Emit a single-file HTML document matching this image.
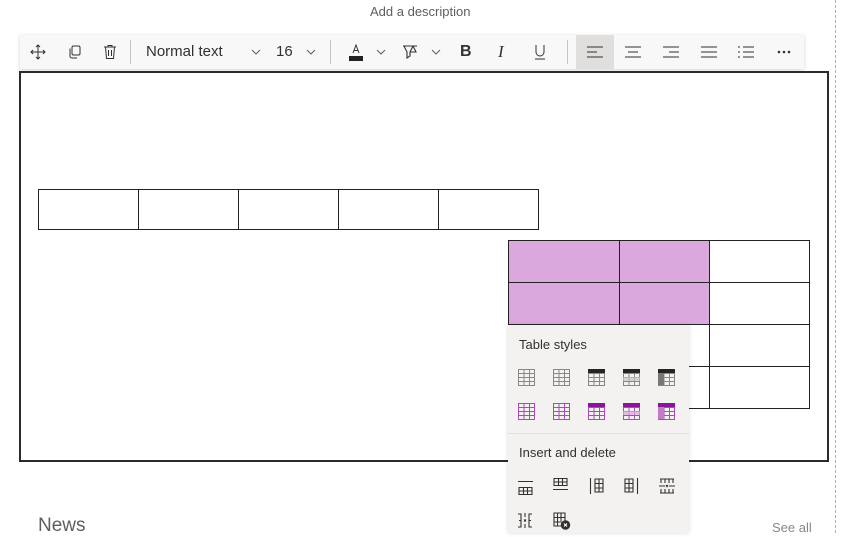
<!DOCTYPE html>
<html><head><meta charset="utf-8">
<style>
*{margin:0;padding:0;box-sizing:border-box}
body{width:842px;height:533px;overflow:hidden;background:#fff;font-family:"Liberation Sans",sans-serif;position:relative;color:#323130}
.abs{position:absolute}
.tb{left:20px;top:35px;width:784px;height:34px;background:#f8f8f8;box-shadow:0 1px 4px rgba(0,0,0,.18)}
.tb svg{position:absolute}
.sep{position:absolute;top:5px;width:1px;height:24px;background:#c8c6c4}
table{border-collapse:collapse;position:absolute}
td{border:1px solid #222;padding:0}
.pop{left:508px;top:325px;width:181px;height:208px;background:#f3f2f1;box-shadow:0 0 4px rgba(0,0,0,.15)}
.pop .h{position:absolute;left:11px;font-size:13px;color:#323130}
.pop svg{position:absolute}
</style></head><body>
<div class="abs" style="left:370px;top:4px;font-size:13px;color:#605e5c">Add a description</div>
<div class="abs" style="left:835px;top:0;height:533px;border-left:1px dashed #b0b0b0"></div>

<div class="abs tb">
 <svg style="left:9px;top:8px" width="18" height="18" viewBox="0 0 18 18" fill="none" stroke="#323130" stroke-width="1"><path d="M9 2v14M2 9h14M7 4l2-2 2 2M7 14l2 2 2-2M4 7L2 9l2 2M14 7l2 2-2 2"/></svg>
 <svg style="left:45px;top:8px" width="18" height="18" viewBox="0 0 18 18" fill="none" stroke="#323130" stroke-width="1"><rect x="7" y="3" width="8" height="9" rx="1.5"/><path d="M5 5.5v7.5a2 2 0 0 0 2 2h5"/></svg>
 <svg style="left:81px;top:8px" width="18" height="18" viewBox="0 0 18 18" fill="none" stroke="#323130" stroke-width="1"><path d="M3 4h12M7 4V2.5h4V4M4.5 4l1 11.5h7l1-11.5M7.5 7v6M10.5 7v6"/></svg>
 <div class="sep" style="left:110px"></div>
 <div class="abs" style="left:126px;top:8px;font-size:15px;color:#323130">Normal text</div>
 <svg style="left:230px;top:13px" width="12" height="8" viewBox="0 0 12 8" fill="none" stroke="#605e5c"><path d="M2 2l4 4 4-4"/></svg>
 <div class="abs" style="left:256px;top:8px;font-size:15px;color:#323130">16</div>
 <svg style="left:285px;top:13px" width="12" height="8" viewBox="0 0 12 8" fill="none" stroke="#605e5c"><path d="M2 2l4 4 4-4"/></svg>
 <div class="sep" style="left:310px"></div>
 <svg style="left:327px;top:7px" width="18" height="20" viewBox="0 0 18 20" fill="none" stroke="#323130" stroke-width="1"><path d="M6 11L9 3l3 8M7 8.5h4"/><rect x="2" y="14" width="14" height="5" fill="#222" stroke="none"/></svg>
 <svg style="left:355px;top:13px" width="12" height="8" viewBox="0 0 12 8" fill="none" stroke="#605e5c"><path d="M2 2l4 4 4-4"/></svg>
 <svg style="left:381px;top:7px" width="18" height="20" viewBox="0 0 18 20" fill="none" stroke="#323130" stroke-width="1.1"><path d="M2 4h14M3 4l3 6v6l3-2v-4l3-6M12 4l3 6H9"/></svg>
 <svg style="left:410px;top:13px" width="12" height="8" viewBox="0 0 12 8" fill="none" stroke="#605e5c"><path d="M2 2l4 4 4-4"/></svg>
 <div class="abs" style="left:440px;top:8px;font-size:16px;font-weight:bold;color:#323130">B</div>
 <div class="abs" style="left:478px;top:7px;font-size:17px;font-style:italic;color:#323130;font-family:'Liberation Serif',serif">I</div>
 <svg style="left:512px;top:8px" width="16" height="18" viewBox="0 0 16 18" fill="none" stroke="#323130" stroke-width="1"><path d="M4 2v7a4 4 0 0 0 8 0V2M3 16h10"/></svg>
 <div class="sep" style="left:547px"></div>
 <div class="abs" style="left:556px;top:0;width:38px;height:34px;background:#e1dfdd"></div>
 <svg style="left:566px;top:9px" width="18" height="16" viewBox="0 0 18 16" stroke="#323130" stroke-width="1"><path d="M1 3h16M1 8h10M1 13h16"/></svg>
 <svg style="left:604px;top:9px" width="18" height="16" viewBox="0 0 18 16" stroke="#323130" stroke-width="1"><path d="M1 3h16M4 8h10M1 13h16"/></svg>
 <svg style="left:642px;top:9px" width="18" height="16" viewBox="0 0 18 16" stroke="#323130" stroke-width="1"><path d="M1 3h16M7 8h10M1 13h16"/></svg>
 <svg style="left:680px;top:9px" width="18" height="16" viewBox="0 0 18 16" stroke="#323130" stroke-width="1"><path d="M1 3h16M1 8h16M1 13h16"/></svg>
 <svg style="left:717px;top:9px" width="18" height="16" viewBox="0 0 18 16" stroke="#323130" stroke-width="1"><path d="M1 3h2M6 3h11M1 8h2M6 8h11M1 13h2M6 13h11"/></svg>
 <svg style="left:756px;top:14px" width="16" height="6" viewBox="0 0 16 6" fill="#323130"><circle cx="3" cy="3" r="1.3"/><circle cx="8" cy="3" r="1.3"/><circle cx="13" cy="3" r="1.3"/></svg>
</div>

<div class="abs" style="left:19px;top:71px;width:810px;height:391px;border:2px solid #2b2b2b"></div>

<table style="left:38px;top:189px;width:501px;height:41px"><tr><td></td><td></td><td></td><td></td><td></td></tr></table>

<table style="left:508px;top:240px;width:302px;height:169px">
<tr><td style="width:111px;background:#dba8de"></td><td style="width:90px;background:#dba8de"></td><td></td></tr>
<tr><td style="background:#dba8de"></td><td style="background:#dba8de"></td><td></td></tr>
<tr><td></td><td></td><td></td></tr>
<tr><td></td><td></td><td></td></tr>
</table>

<div class="abs pop">
 <div class="h" style="top:12px">Table styles</div>
 <svg style="left:0;top:43px" width="181" height="100" viewBox="0 0 181 100" fill="none">
  <defs>
   <g id="gr"><path d="M0 .5h17M0 4.5h17M0 8.5h17M0 12.5h17M0 16.5h17M.5 0v17M6 0v17M11.5 0v17M16.5 0v17"/></g>
  </defs>
  <g stroke="#8a8886"><use href="#gr" x="10" y="1"/><use href="#gr" x="45" y="1"/><use href="#gr" x="80" y="1"/><use href="#gr" x="115" y="1"/><use href="#gr" x="150" y="1"/></g>
  <rect x="80" y="1" width="17" height="4" fill="#252423"/>
  <rect x="115" y="1" width="17" height="4" fill="#252423"/><rect x="115" y="9" width="17" height="4" fill="#c8c6c4" opacity=".7"/>
  <rect x="150" y="1" width="17" height="4" fill="#252423"/><rect x="150" y="5" width="6" height="12" fill="#797775"/>
  <g stroke="#b146c2"><use href="#gr" x="10" y="35"/><use href="#gr" x="45" y="35"/><use href="#gr" x="80" y="35"/><use href="#gr" x="115" y="35"/><use href="#gr" x="150" y="35"/></g>
  <rect x="80" y="35" width="17" height="4" fill="#881798"/>
  <rect x="115" y="35" width="17" height="4" fill="#881798"/><rect x="115" y="43" width="17" height="4" fill="#dba8de" opacity=".7"/>
  <rect x="150" y="35" width="17" height="4" fill="#881798"/><rect x="150" y="39" width="6" height="12" fill="#c27ac9"/>
 </svg>
 <div class="abs" style="left:0;top:108px;width:181px;height:1px;background:#e1dfdd"></div>
 <div class="h" style="top:120px">Insert and delete</div>
 <svg style="left:0;top:152px" width="181" height="58" viewBox="0 0 181 58" fill="none" stroke="#323130" stroke-width="1.1">
  <path d="M10 4.5h15M11 10.5h13v7H11zM11 14h13M15.5 10.5v7M19.5 10.5v7"/>
  <path d="M46 1.5h13v7H46zM46 5h13M50.5 1.5v7M54.5 1.5v7M45 12.5h15"/>
  <path d="M82.5 1v16M87 2h8v13h-8zM87 6.5h8M87 11h8M91 2v13"/>
  <path d="M117 2h8v13h-8zM117 6.5h8M117 11h8M121 2v13M129.5 1v16"/>
  <path d="M152 2h14M152 16h14M153 2v4M157 2v4M161 2v4M165 2v4M153 12v4M157 12v4M161 12v4M165 12v4M151 9h6M161 9h6M158 8l2 2M160 8l-2 2"/>
  <path d="M10 37h3v13h-3M13 43.5h-2M24 37h-3v13h3M21 43.5h2M17 36v4M17 47v4M16 42.5l2 2M18 42.5l-2 2"/>
  <path d="M46 36h11v13h-11zM46 40.5h11M46 45h11M49.5 36v13M53 36v8"/>
  <circle cx="57.5" cy="48" r="4.2" fill="#323130"/><path d="M56 46.5l3 3M59 46.5l-3 3" stroke="#fff"/>
 </svg>
</div>

<div class="abs" style="left:38px;top:515px;font-size:19px;color:#605e5c">News</div>
<div class="abs" style="left:772px;top:520px;font-size:13px;color:#8a8886">See all</div>
</body></html>
